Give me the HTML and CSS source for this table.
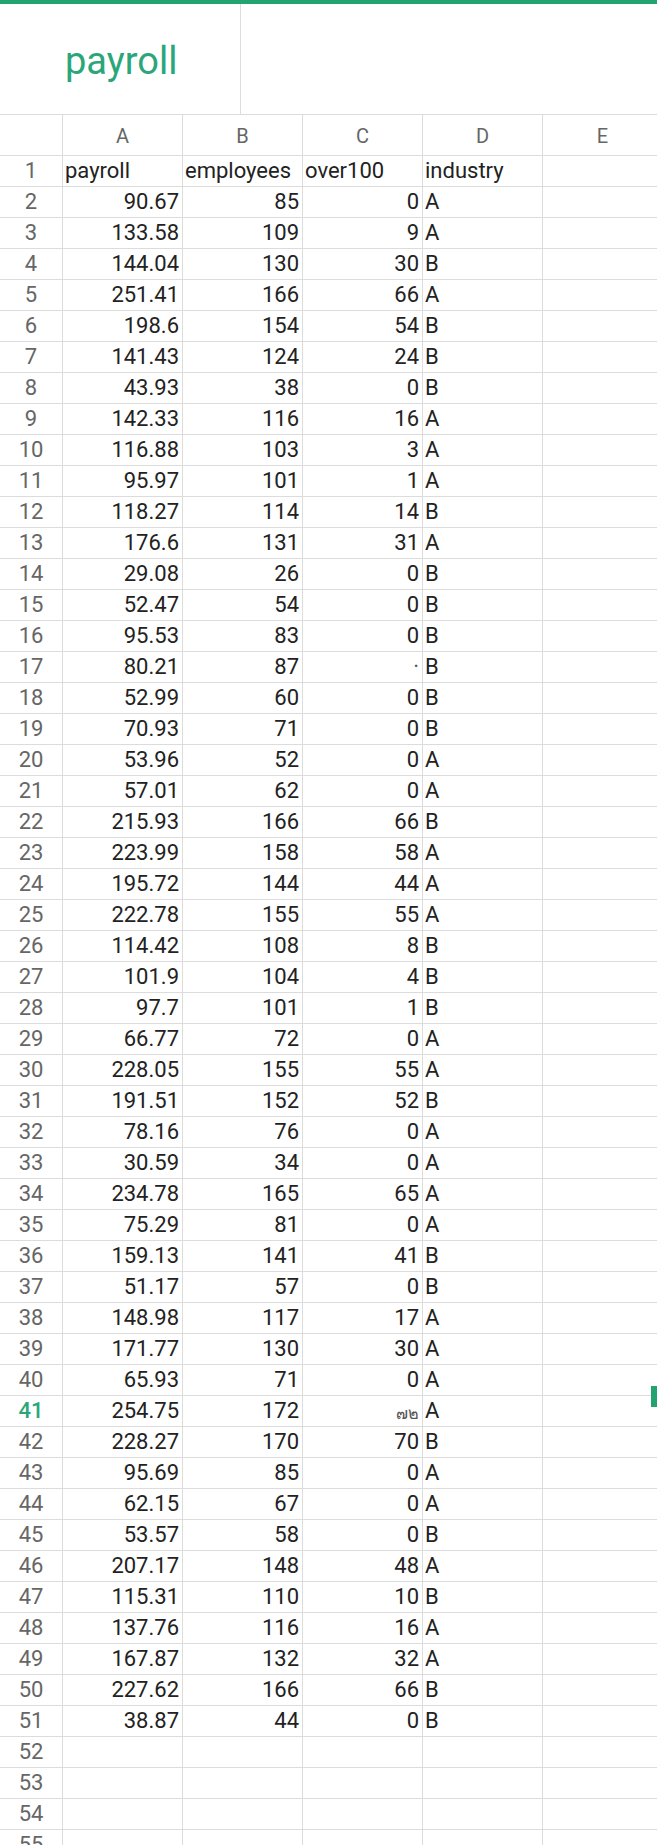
FILE: index.html
```html
<!DOCTYPE html>
<html lang="en">
<head>
<meta charset="utf-8">
<title>payroll</title>
<link rel="stylesheet" href="styles.css">
</head>
<body>
<div class="topbar"></div>
<div class="titlebar">
  <div class="title">payroll</div>
</div>
<div class="sheet">
  <div class="row head"><div class="rn"></div><div class="ch">A</div><div class="ch">B</div><div class="ch">C</div><div class="ch">D</div><div class="ch">E</div></div>
  <div class="row"><div class="rn">1</div><div class="c">payroll</div><div class="c">employees</div><div class="c">over100</div><div class="c">industry</div><div class="c"></div></div>
  <div class="row"><div class="rn">2</div><div class="c n">90.67</div><div class="c n">85</div><div class="c n">0</div><div class="c">A</div><div class="c"></div></div>
  <div class="row"><div class="rn">3</div><div class="c n">133.58</div><div class="c n">109</div><div class="c n">9</div><div class="c">A</div><div class="c"></div></div>
  <div class="row"><div class="rn">4</div><div class="c n">144.04</div><div class="c n">130</div><div class="c n">30</div><div class="c">B</div><div class="c"></div></div>
  <div class="row"><div class="rn">5</div><div class="c n">251.41</div><div class="c n">166</div><div class="c n">66</div><div class="c">A</div><div class="c"></div></div>
  <div class="row"><div class="rn">6</div><div class="c n">198.6</div><div class="c n">154</div><div class="c n">54</div><div class="c">B</div><div class="c"></div></div>
  <div class="row"><div class="rn">7</div><div class="c n">141.43</div><div class="c n">124</div><div class="c n">24</div><div class="c">B</div><div class="c"></div></div>
  <div class="row"><div class="rn">8</div><div class="c n">43.93</div><div class="c n">38</div><div class="c n">0</div><div class="c">B</div><div class="c"></div></div>
  <div class="row"><div class="rn">9</div><div class="c n">142.33</div><div class="c n">116</div><div class="c n">16</div><div class="c">A</div><div class="c"></div></div>
  <div class="row"><div class="rn">10</div><div class="c n">116.88</div><div class="c n">103</div><div class="c n">3</div><div class="c">A</div><div class="c"></div></div>
  <div class="row"><div class="rn">11</div><div class="c n">95.97</div><div class="c n">101</div><div class="c n">1</div><div class="c">A</div><div class="c"></div></div>
  <div class="row"><div class="rn">12</div><div class="c n">118.27</div><div class="c n">114</div><div class="c n">14</div><div class="c">B</div><div class="c"></div></div>
  <div class="row"><div class="rn">13</div><div class="c n">176.6</div><div class="c n">131</div><div class="c n">31</div><div class="c">A</div><div class="c"></div></div>
  <div class="row"><div class="rn">14</div><div class="c n">29.08</div><div class="c n">26</div><div class="c n">0</div><div class="c">B</div><div class="c"></div></div>
  <div class="row"><div class="rn">15</div><div class="c n">52.47</div><div class="c n">54</div><div class="c n">0</div><div class="c">B</div><div class="c"></div></div>
  <div class="row"><div class="rn">16</div><div class="c n">95.53</div><div class="c n">83</div><div class="c n">0</div><div class="c">B</div><div class="c"></div></div>
  <div class="row"><div class="rn">17</div><div class="c n">80.21</div><div class="c n">87</div><div class="c n dot">·</div><div class="c">B</div><div class="c"></div></div>
  <div class="row"><div class="rn">18</div><div class="c n">52.99</div><div class="c n">60</div><div class="c n">0</div><div class="c">B</div><div class="c"></div></div>
  <div class="row"><div class="rn">19</div><div class="c n">70.93</div><div class="c n">71</div><div class="c n">0</div><div class="c">B</div><div class="c"></div></div>
  <div class="row"><div class="rn">20</div><div class="c n">53.96</div><div class="c n">52</div><div class="c n">0</div><div class="c">A</div><div class="c"></div></div>
  <div class="row"><div class="rn">21</div><div class="c n">57.01</div><div class="c n">62</div><div class="c n">0</div><div class="c">A</div><div class="c"></div></div>
  <div class="row"><div class="rn">22</div><div class="c n">215.93</div><div class="c n">166</div><div class="c n">66</div><div class="c">B</div><div class="c"></div></div>
  <div class="row"><div class="rn">23</div><div class="c n">223.99</div><div class="c n">158</div><div class="c n">58</div><div class="c">A</div><div class="c"></div></div>
  <div class="row"><div class="rn">24</div><div class="c n">195.72</div><div class="c n">144</div><div class="c n">44</div><div class="c">A</div><div class="c"></div></div>
  <div class="row"><div class="rn">25</div><div class="c n">222.78</div><div class="c n">155</div><div class="c n">55</div><div class="c">A</div><div class="c"></div></div>
  <div class="row"><div class="rn">26</div><div class="c n">114.42</div><div class="c n">108</div><div class="c n">8</div><div class="c">B</div><div class="c"></div></div>
  <div class="row"><div class="rn">27</div><div class="c n">101.9</div><div class="c n">104</div><div class="c n">4</div><div class="c">B</div><div class="c"></div></div>
  <div class="row"><div class="rn">28</div><div class="c n">97.7</div><div class="c n">101</div><div class="c n">1</div><div class="c">B</div><div class="c"></div></div>
  <div class="row"><div class="rn">29</div><div class="c n">66.77</div><div class="c n">72</div><div class="c n">0</div><div class="c">A</div><div class="c"></div></div>
  <div class="row"><div class="rn">30</div><div class="c n">228.05</div><div class="c n">155</div><div class="c n">55</div><div class="c">A</div><div class="c"></div></div>
  <div class="row"><div class="rn">31</div><div class="c n">191.51</div><div class="c n">152</div><div class="c n">52</div><div class="c">B</div><div class="c"></div></div>
  <div class="row"><div class="rn">32</div><div class="c n">78.16</div><div class="c n">76</div><div class="c n">0</div><div class="c">A</div><div class="c"></div></div>
  <div class="row"><div class="rn">33</div><div class="c n">30.59</div><div class="c n">34</div><div class="c n">0</div><div class="c">A</div><div class="c"></div></div>
  <div class="row"><div class="rn">34</div><div class="c n">234.78</div><div class="c n">165</div><div class="c n">65</div><div class="c">A</div><div class="c"></div></div>
  <div class="row"><div class="rn">35</div><div class="c n">75.29</div><div class="c n">81</div><div class="c n">0</div><div class="c">A</div><div class="c"></div></div>
  <div class="row"><div class="rn">36</div><div class="c n">159.13</div><div class="c n">141</div><div class="c n">41</div><div class="c">B</div><div class="c"></div></div>
  <div class="row"><div class="rn">37</div><div class="c n">51.17</div><div class="c n">57</div><div class="c n">0</div><div class="c">B</div><div class="c"></div></div>
  <div class="row"><div class="rn">38</div><div class="c n">148.98</div><div class="c n">117</div><div class="c n">17</div><div class="c">A</div><div class="c"></div></div>
  <div class="row"><div class="rn">39</div><div class="c n">171.77</div><div class="c n">130</div><div class="c n">30</div><div class="c">A</div><div class="c"></div></div>
  <div class="row"><div class="rn">40</div><div class="c n">65.93</div><div class="c n">71</div><div class="c n">0</div><div class="c">A</div><div class="c"></div></div>
  <div class="row sel"><div class="rn">41</div><div class="c n">254.75</div><div class="c n">172</div><div class="c n thai">๗๒</div><div class="c">A</div><div class="c"></div><div class="handle"></div></div>
  <div class="row"><div class="rn">42</div><div class="c n">228.27</div><div class="c n">170</div><div class="c n">70</div><div class="c">B</div><div class="c"></div></div>
  <div class="row"><div class="rn">43</div><div class="c n">95.69</div><div class="c n">85</div><div class="c n">0</div><div class="c">A</div><div class="c"></div></div>
  <div class="row"><div class="rn">44</div><div class="c n">62.15</div><div class="c n">67</div><div class="c n">0</div><div class="c">A</div><div class="c"></div></div>
  <div class="row"><div class="rn">45</div><div class="c n">53.57</div><div class="c n">58</div><div class="c n">0</div><div class="c">B</div><div class="c"></div></div>
  <div class="row"><div class="rn">46</div><div class="c n">207.17</div><div class="c n">148</div><div class="c n">48</div><div class="c">A</div><div class="c"></div></div>
  <div class="row"><div class="rn">47</div><div class="c n">115.31</div><div class="c n">110</div><div class="c n">10</div><div class="c">B</div><div class="c"></div></div>
  <div class="row"><div class="rn">48</div><div class="c n">137.76</div><div class="c n">116</div><div class="c n">16</div><div class="c">A</div><div class="c"></div></div>
  <div class="row"><div class="rn">49</div><div class="c n">167.87</div><div class="c n">132</div><div class="c n">32</div><div class="c">A</div><div class="c"></div></div>
  <div class="row"><div class="rn">50</div><div class="c n">227.62</div><div class="c n">166</div><div class="c n">66</div><div class="c">B</div><div class="c"></div></div>
  <div class="row"><div class="rn">51</div><div class="c n">38.87</div><div class="c n">44</div><div class="c n">0</div><div class="c">B</div><div class="c"></div></div>
  <div class="row"><div class="rn">52</div><div class="c"></div><div class="c"></div><div class="c"></div><div class="c"></div><div class="c"></div></div>
  <div class="row"><div class="rn">53</div><div class="c"></div><div class="c"></div><div class="c"></div><div class="c"></div><div class="c"></div></div>
  <div class="row"><div class="rn">54</div><div class="c"></div><div class="c"></div><div class="c"></div><div class="c"></div><div class="c"></div></div>
  <div class="row"><div class="rn">55</div><div class="c"></div><div class="c"></div><div class="c"></div><div class="c"></div><div class="c"></div></div>
</div>
</body>
</html>
```

FILE: styles.css
```css
html, body {
  margin: 0;
  padding: 0;
  background: #ffffff;
  overflow: hidden;
}
body {
  width: 657px;
  height: 1845px;
  font-family: Roboto, "Liberation Sans", "DejaVu Sans", sans-serif;
  color: #222222;
}
.topbar {
  height: 4px;
  background: #22a36f;
}
.titlebar {
  height: 110px;
  display: flex;
}
.title {
  width: 241px;
  border-right: 1px solid #dcdcdc;
  box-sizing: border-box;
  display: flex;
  align-items: center;
  padding: 3px 0 0 65px;
  font-size: 38px;
  color: #2aa67a;
}
.sheet {
  border-top: 1px solid #dcdcdc;
  display: flex;
  flex-direction: column;
  row-gap: 1px;
  background: #dcdcdc;
  width: 662px;
}
.row {
  position: relative;
  display: grid;
  grid-template-columns: 62px repeat(5, 119px);
  column-gap: 1px;
  height: 30px;
}
.row.head {
  height: 40px;
}
.row > div {
  background: #ffffff;
  box-sizing: border-box;
  white-space: nowrap;
  overflow: hidden;
}
.rn {
  text-align: center;
  font-size: 22px;
  color: #666666;
  line-height: 24px;
  padding-top: 3px;
}
.ch {
  text-align: center;
  font-size: 20px;
  color: #666666;
  line-height: 40px;
  padding-top: 1px;
}
.head .rn {
  padding-top: 0;
}
.c {
  font-size: 22px;
  line-height: 24px;
  padding: 3px 3px 0 2px;
  color: #222222;
}
.c.n {
  text-align: right;
}
.c.dot {
  color: #555555;
}
.c.thai {
  font-size: 16px;
  color: #555555;
  padding-top: 6px;
}
.sel .rn {
  color: #2aa67a;
  font-weight: 500;
}
.row > .handle {
  position: absolute;
  left: 651px;
  top: -10px;
  width: 6px;
  height: 21px;
  background: #22a36f;
}
```
